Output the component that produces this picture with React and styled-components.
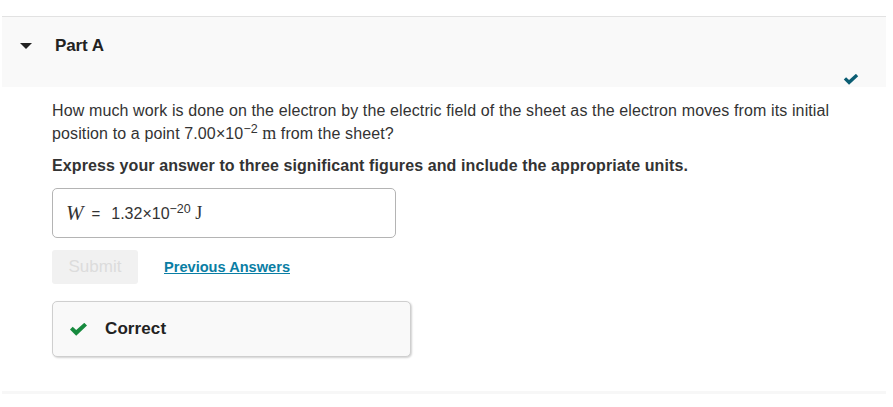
import React from "react";
import styled, { createGlobalStyle } from "styled-components";

const GlobalStyle = createGlobalStyle`
  body {
    margin: 0;
    background: #fff;
    font-family: "Liberation Sans", Arial, sans-serif;
    color: #333;
  }
`;

const Page = styled.div`
  width: 884px;
  margin-left: 2px;
  padding-top: 16px;
`;

const PartHeader = styled.div`
  position: relative;
  display: flex;
  align-items: center;
  height: 71px;
  padding: 0 0 12px 18px;
  box-sizing: border-box;
  background: #f9f9f9;
  border-top: 1px solid #e2e2e2;
`;

const Caret = styled.span`
  width: 0;
  height: 0;
  border-left: 6px solid transparent;
  border-right: 6px solid transparent;
  border-top: 6px solid #222;
  margin-right: 23px;
`;

const PartTitle = styled.h2`
  margin: 0;
  font-size: 17px;
  font-weight: 700;
  color: #222;
  letter-spacing: -0.1px;
`;

const DoneMark = styled.span`
  position: absolute;
  right: 27px;
  bottom: 2px;
  display: flex;
`;

const CheckSvg = styled.svg`
  display: block;
  fill: ${({ $color }) => $color};
`;

const Body = styled.div`
  padding: 13px 0 34px 50px;
`;

const Question = styled.p`
  margin: 0;
  font-size: 16px;
  line-height: 22px;
  letter-spacing: 0.12px;
  color: #333;
  width: 800px;
`;

const Sup = styled.sup`
  font-size: 12.5px;
  line-height: 0;
  vertical-align: 6px;
  letter-spacing: 0;
`;

const MathUnit = styled.span`
  font-family: "Liberation Serif", "Times New Roman", serif;
  font-size: 18px;
  letter-spacing: 0;
`;

const Instruction = styled.p`
  margin: 12px 0 0;
  font-size: 16px;
  line-height: 18px;
  font-weight: 700;
  letter-spacing: 0.1px;
  color: #333;
`;

const AnswerBox = styled.div`
  display: flex;
  align-items: center;
  margin-top: 13px;
  width: 344px;
  height: 50px;
  box-sizing: border-box;
  border: 1px solid #b4b4b4;
  border-radius: 5px;
  padding: 0 13px;
  background: #fff;
`;

const Var = styled.span`
  font-family: "Liberation Serif", "Times New Roman", serif;
  font-style: italic;
  font-size: 21px;
  color: #333;
`;

const Equals = styled.span`
  font-size: 15px;
  margin: 0 11px 0 8px;
  color: #333;
`;

const Value = styled.span`
  font-size: 16px;
  color: #333;
`;

const Actions = styled.div`
  display: flex;
  align-items: center;
  gap: 26px;
  margin-top: 12px;
`;

const SubmitButton = styled.button`
  width: 86px;
  height: 34px;
  border: none;
  border-radius: 3px;
  background: #f1f1f1;
  color: #dcdcdc;
  font-family: "Liberation Sans", Arial, sans-serif;
  font-size: 17px;
  padding: 0;
`;

const Link = styled.a`
  font-size: 14.6px;
  font-weight: 700;
  color: #0a7ea4;
  text-decoration: underline;
`;

const Feedback = styled.div`
  display: flex;
  align-items: center;
  gap: 18px;
  margin-top: 17px;
  width: 359px;
  height: 56px;
  box-sizing: border-box;
  padding: 0 17px;
  background: #f9f9f9;
  border: 1px solid #cfcfcf;
  border-radius: 5px;
  box-shadow: 1px 1px 2px rgba(0, 0, 0, 0.18);
`;

const FeedbackText = styled.span`
  font-size: 17px;
  font-weight: 700;
  letter-spacing: 0.1px;
  color: #222;
`;

const Footer = styled.div`
  height: 3px;
  background: #f7f7f7;
`;

const Check = ({ color, w, h }) => (
  <CheckSvg $color={color} width={w} height={h} viewBox="0 0 17 13">
    <path d="M0 6.4 L2.7 3.7 L6.2 7.1 L14.3 -0.2 L17 2.6 L6.2 12.8 Z" />
  </CheckSvg>
);

export default function App() {
  return (
    <>
      <GlobalStyle />
      <Page>
        <PartHeader>
          <Caret />
          <PartTitle>Part A</PartTitle>
          <DoneMark>
            <Check color="#0b5d73" w={16} h={11} />
          </DoneMark>
        </PartHeader>
        <Body>
          <Question>
            How much work is done on the electron by the electric field of the sheet as the electron moves from its initial
            position to a point 7.00×10<Sup>−2</Sup> <MathUnit>m</MathUnit> from the sheet?
          </Question>
          <Instruction>Express your answer to three significant figures and include the appropriate units.</Instruction>
          <AnswerBox>
            <Var>W</Var>
            <Equals>=</Equals>
            <Value>
              1.32×10<Sup>−20</Sup> <MathUnit>J</MathUnit>
            </Value>
          </AnswerBox>
          <Actions>
            <SubmitButton disabled>Submit</SubmitButton>
            <Link href="#">Previous Answers</Link>
          </Actions>
          <Feedback>
            <Check color="#178a3e" w={17} h={13} />
            <FeedbackText>Correct</FeedbackText>
          </Feedback>
        </Body>
        <Footer />
      </Page>
    </>
  );
}
